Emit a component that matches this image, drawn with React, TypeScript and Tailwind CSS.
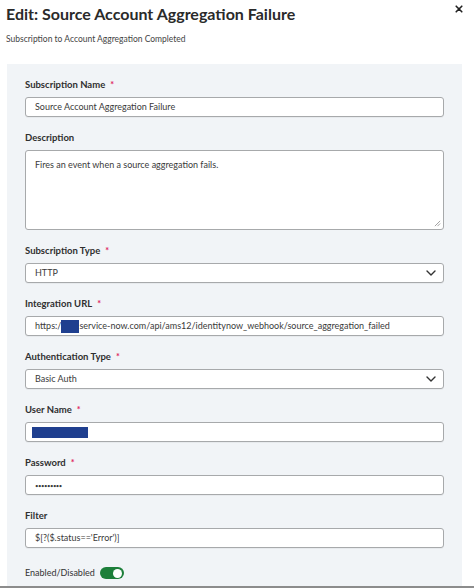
import React from "react";

const font = { fontFamily: "Lato, 'Open Sans', sans-serif" };

function Label({ text, required }: { text: string; required?: boolean }) {
  return (
    <div className="flex h-3 items-center text-[9.5px] font-bold leading-3 text-[#2f2f2f]">
      {text}
      {required && <span className="ml-[5px] text-[9px] font-bold text-[#e0245e]">*</span>}
    </div>
  );
}

function Chevron() {
  return (
    <svg viewBox="0 0 10 6" className="h-[6px] w-[10px]" fill="none" stroke="#333" strokeWidth={1.4} strokeLinecap="round" strokeLinejoin="round">
      <path d="M1 1l4 4 4-4" />
    </svg>
  );
}

function Box({ children, select }: { children: React.ReactNode; select?: boolean }) {
  return (
    <div className="mt-[6px] flex h-5 items-center justify-between rounded-[3px] border border-[#a7a9ab] bg-white pl-[9px] pr-[7px] text-[9px] text-[#3a3a3a] shadow-[0_1px_0_rgba(0,0,0,0.04)]">
      <div className="flex items-center">{children}</div>
      {select && <Chevron />}
    </div>
  );
}

export default function App() {
  return (
    <div className="relative h-[588px] w-[474px] overflow-hidden bg-white" style={font}>
      <button className="absolute right-[11px] top-[5px] text-[#222]" aria-label="Close">
        <svg viewBox="0 0 10 10" className="h-[8px] w-[8px]" fill="none" stroke="currentColor" strokeWidth={2} strokeLinecap="round">
          <path d="M1.5 1.5l7 7M8.5 1.5l-7 7" />
        </svg>
      </button>

      <div className="px-[6px] pt-[4px]">
        <h1 className="text-[16px] font-bold leading-5 text-[#2a2a2a]">Edit: Source Account Aggregation Failure</h1>
        <p className="mt-[9px] text-[8.5px] leading-3 text-[#444]">Subscription to Account Aggregation Completed</p>
      </div>

      <div className="ml-[7px] mr-[12px] mt-[19px] h-[522px] bg-[#f1f4f7] pl-[18px] pr-[18px] pt-[15px]">
        <Label text="Subscription Name" required />
        <Box>Source Account Aggregation Failure</Box>

        <div className="mt-[15px]">
          <Label text="Description" />
          <div className="relative mt-[6px] h-20 rounded-[3px] border border-[#a7a9ab] bg-white pl-[9px] pt-[7px] text-[9px] text-[#3a3a3a]">
            Fires an event when a source aggregation fails.
            <svg viewBox="0 0 8 8" className="absolute bottom-[2px] right-[2px] h-[7px] w-[7px]" stroke="#8a8a8a" strokeWidth={0.9}>
              <path d="M7 1L1 7M7 4L4 7" />
            </svg>
          </div>
        </div>

        <div className="mt-[15px]">
          <Label text="Subscription Type" required />
          <Box select>HTTP</Box>
        </div>

        <div className="mt-[15px]">
          <Label text="Integration URL" required />
          <Box>
            https:/
            <span className="inline-block h-[13px] w-[18px] bg-[#1f3f8f]" />
            service-now.com/api/ams12/identitynow_webhook/source_aggregation_failed
          </Box>
        </div>

        <div className="mt-[15px]">
          <Label text="Authentication Type" required />
          <Box select>Basic Auth</Box>
        </div>

        <div className="mt-[15px]">
          <Label text="User Name" required />
          <Box>
            <span className="-ml-[3px] inline-block h-[11px] w-[56px] bg-[#1f3f8f]" />
          </Box>
        </div>

        <div className="mt-[15px]">
          <Label text="Password" required />
          <Box>
            <span className="text-[6px] tracking-[-0.5px]">•••••••••</span>
          </Box>
        </div>

        <div className="mt-[15px]">
          <Label text="Filter" />
          <Box>$[?($.status=='Error')]</Box>
        </div>

        <div className="mt-[19px] flex h-3 items-center gap-[5px] text-[9px] text-[#333]">
          Enabled/Disabled
          <span className="flex h-3 w-6 items-center justify-end rounded-full bg-[#1d7f3a] pr-[2px]">
            <span className="h-[9px] w-[9px] rounded-full bg-white" />
          </span>
        </div>
      </div>

      <div className="absolute bottom-0 left-0 h-[2px] w-full bg-[#8c8c8c]" />
    </div>
  );
}
